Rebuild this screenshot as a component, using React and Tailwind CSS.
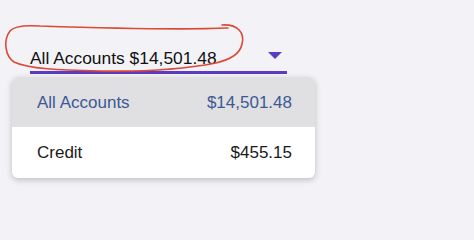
import React from "react";

export default function App() {
  return (
    <div className="relative w-[474px] h-[240px] bg-[#f3f3f7] overflow-hidden" style={{ fontFamily: '"Liberation Sans", Arial, sans-serif' }}>
      <div className="pt-[44px] pl-[30px] w-[287px]">
        <div className="flex items-center justify-between h-[30px] border-b-[3px] border-[#5a3dc0]">
          <span className="text-[17.4px] text-[#111] leading-none pt-[2px]">All Accounts $14,501.48</span>
          <svg width="14" height="7" viewBox="0 0 14 7" className="mr-[5px] mb-[5px]">
            <path d="M0 0 L14 0 L7 7 Z" fill="#5a3dc0" />
          </svg>
        </div>
      </div>
      <div className="ml-[12px] mt-[3px] w-[303px] rounded-[6px] bg-white shadow-[0_2px_6px_rgba(0,0,0,0.22)] overflow-hidden text-[17px] leading-none">
        <div className="flex items-center justify-between h-[50px] bg-[#e0e0e2] pl-[25px] pr-[23px] text-[#3d5894]">
          <span>All Accounts</span>
          <span>$14,501.48</span>
        </div>
        <div className="flex items-center justify-between h-[51px] pl-[25px] pr-[23px] text-[#1a1a1a]">
          <span>Credit</span>
          <span>$455.15</span>
        </div>
      </div>
      <svg className="absolute left-0 top-0 pointer-events-none" width="474" height="240" viewBox="0 0 474 240">
        <path
          d="M 222 25 C 238 24, 245 33, 242 44 C 240 54, 231 59, 216 63 C 190 68, 150 72, 100 71 C 60 70, 28 69, 14 62 C 5 56, 3 40, 10 31 C 14 26, 25 25, 40 26 C 100 28, 180 30, 228 28"
          fill="none"
          stroke="#dc4a36"
          strokeWidth="1.6"
          strokeLinecap="round"
        />
      </svg>
    </div>
  );
}
